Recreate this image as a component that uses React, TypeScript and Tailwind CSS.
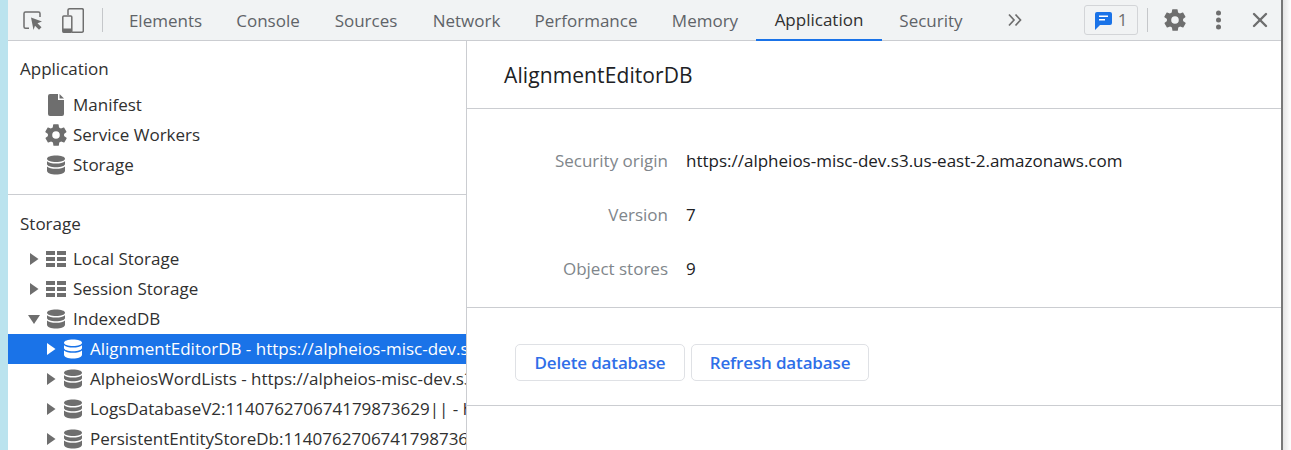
import { X } from "lucide-react";
import React from "react";

const tabs = [
  { name: "Elements", w: "w-[107px]" },
  { name: "Console", w: "w-[98px]" },
  { name: "Sources", w: "w-[98px]" },
  { name: "Network", w: "w-[103px]" },
  { name: "Performance", w: "w-[136px]" },
  { name: "Memory", w: "w-[102px]" },
  { name: "Application", w: "w-[126px]" },
  { name: "Security", w: "w-[98px]" },
];

const DbIcon = ({ white }: { white?: boolean }) => (
  <svg width="20" height="20" viewBox="0 0 20 20" className={white ? "fill-white" : "fill-[#6e6e6e]"}>
    <path d="M10 0.500C5 0.500 1 1.800 1 3.800S5 7 10 7s9-1.200 9-3.200S15 0.500 10 0.500z" />
    <path d="M1 6.300V9c0 2 4 3.200 9 3.200s9-1.200 9-3.200V6.300C17.400 7.900 14 8.600 10 8.600S2.600 7.900 1 6.300z" />
    <path d="M1 11.500v4.200c0 2.200 4 3.800 9 3.800s9-1.600 9-3.800v-4.200c-1.600 1.600-5 2.300-9 2.300s-7.400-.7-9-2.300z" />
  </svg>
);

const GridIcon = () => (
  <svg width="20" height="16" viewBox="0 0 20 16" className="fill-[#6e6e6e]">
    <rect x="0" y="0" width="9" height="4" />
    <rect x="11" y="0" width="9" height="4" />
    <rect x="0" y="6" width="9" height="4" />
    <rect x="11" y="6" width="9" height="4" />
    <rect x="0" y="12" width="9" height="4" />
    <rect x="11" y="12" width="9" height="4" />
  </svg>
);

const Arrow = ({ down, white }: { down?: boolean; white?: boolean }) => (
  <svg width="12" height="12" viewBox="0 0 12 12" className={white ? "fill-white" : "fill-[#6e6e6e]"}>
    {down ? <path d="M0 2h12L6 11z" /> : <path d="M2 0l8.500 6L2 12z" />}
  </svg>
);

const GearIcon = ({ size }: { size: number }) => (
  <svg width={size} height={size} viewBox="0 0 24 24" className="shrink-0 fill-[#6e6e6e]">
    <path
      fillRule="evenodd"
      d="M19.400 13c.1-.3.1-.7.1-1s0-.7-.1-1l2.100-1.600c.2-.2.2-.4.1-.6l-2-3.500c-.1-.2-.4-.3-.6-.2l-2.500 1c-.5-.4-1.100-.7-1.700-1l-.4-2.700c0-.2-.2-.4-.5-.4h-4c-.3 0-.5.2-.5.400l-.4 2.700c-.6.3-1.200.6-1.700 1l-2.500-1c-.2-.1-.5 0-.6.2l-2 3.500c-.1.200-.1.400.1.600L4.600 11c-.1.300-.1.700-.1 1s0 .7.100 1l-2.100 1.600c-.2.2-.2.4-.1.600l2 3.500c.1.200.4.300.6.200l2.500-1c.5.400 1.100.7 1.700 1l.4 2.700c0 .2.200.4.500.4h4c.3 0 .5-.2.500-.4l.4-2.700c.6-.3 1.200-.6 1.700-1l2.500 1c.2.100.5 0 .6-.2l2-3.500c.1-.2.100-.4-.1-.6L19.400 13zM12 15.500a3.500 3.500 0 1 1 0-7 3.500 3.500 0 0 1 0 7z"
    />
  </svg>
);

const FileIcon = () => (
  <svg width="16" height="22" viewBox="0 0 16 22" className="fill-[#6e6e6e]">
    <path d="M2 0h8v6h6v14q0 2-2 2H2q-2 0-2-2V2q0-2 2-2z" />
    <path d="M11.500 0L16 4.500h-4.500z" />
  </svg>
);

const Row = ({
  label,
  icon,
  arrow,
  down,
  selected,
  indent,
}: {
  label: string;
  icon: React.ReactNode;
  arrow?: boolean;
  down?: boolean;
  selected?: boolean;
  indent?: boolean;
}) => (
  <div
    className={`flex h-[30px] items-center whitespace-nowrap overflow-hidden ${indent ? "pl-[37px]" : "pl-[20px]"} ${
      selected ? "bg-[#1a73e8] text-white" : "text-[#303030]"
    }`}
  >
    <span className="flex w-[18px] shrink-0 items-center justify-start">
      {arrow && <Arrow down={down} white={selected} />}
    </span>
    <span className="flex w-[20px] shrink-0 items-center justify-center">{icon}</span>
    <span className="ml-[7px]">{label}</span>
  </div>
);

const AppRow = ({ label, icon }: { label: string; icon: React.ReactNode }) => (
  <div className="flex h-[30px] items-center pl-[38px] text-[#303030]">
    <span className="flex w-[20px] justify-center">{icon}</span>
    <span className="ml-[7px]">{label}</span>
  </div>
);

const Meta = ({ k, v }: { k: string; v: string }) => (
  <div className="flex h-[54px] items-center">
    <span className="w-[201px] text-right text-[#80868b]">{k}</span>
    <span className="ml-[18px] text-[#202124]">{v}</span>
  </div>
);

export default function App() {
  return (
    <div
      className="flex h-[450px] w-[1291px] overflow-hidden bg-white text-[17px] leading-[20px]"
      style={{ fontFamily: '"Open Sans", "Noto Sans", sans-serif' }}
    >
      <div className="w-[8px] shrink-0 bg-[#bbe3ee]" />
      <div className="flex w-[1273px] shrink-0 flex-col">
        {/* toolbar */}
        <div className="flex h-[41px] shrink-0 items-center border-b border-[#cbcdd1] bg-[#f1f3f4] text-[#5f6368]">
          <svg width="20" height="19" viewBox="0 0 20 19" className="ml-[15px] shrink-0">
            <path d="M6 17.200H2.500Q1 17.200 1 15.700V2.500Q1 1 2.500 1h13Q17 1 17 2.500V6" fill="none" stroke="#6e6e6e" strokeWidth="1.500" />
            <path d="M8 6.500l11 4-4.500 1.700 4 4-2.500 2.500-4-4L10.500 19z" fill="#6e6e6e" />
          </svg>
          <svg width="22" height="25" viewBox="0 0 22 25" className="ml-[19px] shrink-0">
            <path d="M6 7V2Q6 .800 7.500 .800h12.500Q21.300 .800 21.300 2v21q0 1.200-1.300 1.200H10" fill="none" stroke="#6e6e6e" strokeWidth="1.500" />
            <rect x=".800" y="8" width="9" height="16.200" rx="1" fill="none" stroke="#6e6e6e" strokeWidth="1.500" />
            <rect x=".800" y="20.500" width="9" height="4" fill="#6e6e6e" />
          </svg>
          <div className="ml-[18px] h-[24px] w-px shrink-0 bg-[#c5c7ca]" />
          <div className="ml-[9px] flex h-full">
            {tabs.map((t) => (
              <div
                key={t.name}
                className={`flex h-[41px] items-center justify-center whitespace-nowrap ${t.w} ${
                  t.name === "Application" ? "border-b-2 border-[#1a73e8] text-[#303030]" : ""
                }`}
              >
                {t.name}
              </div>
            ))}
          </div>
          <svg width="16" height="14" viewBox="0 0 16 14" className="ml-[27px] shrink-0">
            <path d="M2 1.500L7 7l-5 5.500M8.500 1.500l5 5.500-5 5.500" fill="none" stroke="#6e6e6e" strokeWidth="1.700" />
          </svg>
          <div className="ml-auto flex items-center">
            <div className="flex h-[30px] w-[54px] items-center justify-center gap-[6px] rounded-[3px] border border-[#d3d5d8] text-[#6e6e6e]">
              <svg width="17" height="19" viewBox="0 0 17 19">
                <path d="M2 1h13q2 0 2 2v9q0 2-2 2H5l-5 5V3q0-2 2-2z" fill="#1a73e8" />
                <rect x="4" y="4.500" width="9" height="1.500" fill="#fff" />
                <rect x="4" y="8" width="6" height="1.500" fill="#fff" />
              </svg>
              1
            </div>
            <div className="ml-[9px] h-[24px] w-px bg-[#c5c7ca]" />
            <span className="ml-[14px] flex">
              <GearIcon size={26} />
            </span>
            <svg width="7" height="20" viewBox="0 0 7 20" className="ml-[27px] fill-[#6e6e6e]">
              <circle cx="3.500" cy="3" r="2.500" />
              <circle cx="3.500" cy="10" r="2.500" />
              <circle cx="3.500" cy="17" r="2.500" />
            </svg>
            <X size={24} strokeWidth={2.400} className="ml-[26px] mr-[9px] text-[#6e6e6e]" />
          </div>
        </div>

        <div className="flex min-h-0 flex-1">
          {/* sidebar */}
          <div className="w-[459px] shrink-0 overflow-hidden border-r border-[#cbcdd1]">
            <div className="border-b border-[#cbcdd1] pb-[14px]">
              <div className="ml-[12px] h-[49px] pt-[18px] text-[#303030]">Application</div>
              <AppRow label="Manifest" icon={<FileIcon />} />
              <AppRow label="Service Workers" icon={<GearIcon size={26} />} />
              <AppRow label="Storage" icon={<DbIcon />} />
            </div>
            <div className="ml-[12px] h-[49px] pt-[19px] text-[#303030]">Storage</div>
            <Row label="Local Storage" icon={<GridIcon />} arrow />
            <Row label="Session Storage" icon={<GridIcon />} arrow />
            <Row label="IndexedDB" icon={<DbIcon />} arrow down />
            <Row label="AlignmentEditorDB - https://alpheios-misc-dev.s3.us-east-2.amazonaws.com" icon={<DbIcon white />} arrow selected indent />
            <Row label="AlpheiosWordLists - https://alpheios-misc-dev.s3.us-east-2.amazonaws.com" icon={<DbIcon />} arrow indent />
            <Row label="LogsDatabaseV2:114076270674179873629|| - https://alpheios-misc-dev.s3" icon={<DbIcon />} arrow indent />
            <Row label="PersistentEntityStoreDb:114076270674179873629" icon={<DbIcon />} arrow indent />
          </div>

          {/* main panel */}
          <div className="min-w-0 flex-1">
            <div className="flex h-[68px] items-center border-b border-[#cbcdd1] pl-[37px] text-[21px] tracking-[0.1px] text-[#202124]">
              AlignmentEditorDB
            </div>
            <div className="border-b border-[#cbcdd1] pb-[11px] pt-[25px]">
              <Meta k="Security origin" v="https://alpheios-misc-dev.s3.us-east-2.amazonaws.com" />
              <Meta k="Version" v="7" />
              <Meta k="Object stores" v="9" />
            </div>
            <div className="flex gap-[6px] border-b border-[#cbcdd1] pb-[24px] pl-[48px] pt-[36px] font-semibold tracking-[-0.15px] text-[#2f6fe8]">
              <button className="h-[37px] w-[170px] rounded-[5px] border border-[#dfe1e5]">Delete database</button>
              <button className="h-[37px] w-[178px] rounded-[5px] border border-[#dfe1e5]">Refresh database</button>
            </div>
          </div>
        </div>
      </div>
      <div className="w-[2px] shrink-0 bg-[#777777]" />
      <div className="flex-1 bg-gradient-to-r from-[#e4e4e4] to-white" />
    </div>
  );
}
